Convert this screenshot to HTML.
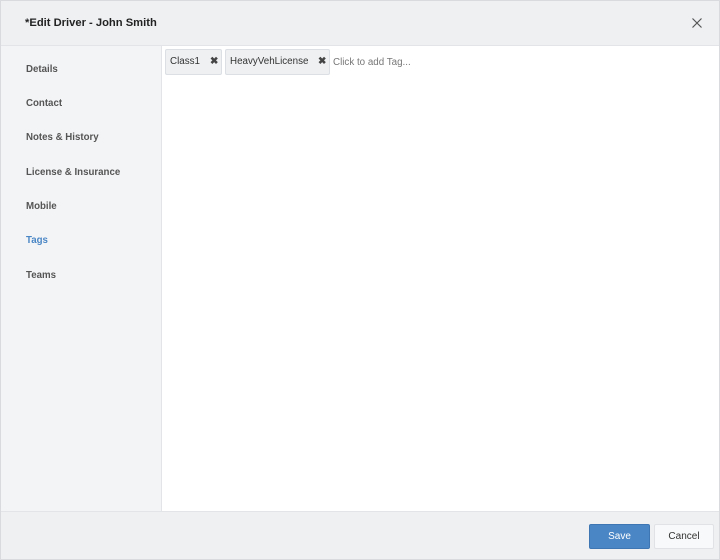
<!DOCTYPE html>
<html><head><style>
*{margin:0;padding:0;box-sizing:border-box}
body{width:720px;height:560px;font-family:"Liberation Sans",Arial,sans-serif;background:#eef0f2;position:relative;overflow:hidden}
.frame{position:absolute;left:0;top:0;width:720px;height:560px;border:1px solid #d8dadd;z-index:5;pointer-events:none}
.hdr{position:absolute;left:0;top:0;width:720px;height:46px;background:#eef0f2;border-bottom:1px solid #e2e4e7}
.title{position:absolute;left:25px;top:17px;font-size:11.2px;font-weight:bold;color:#222}
.close{position:absolute;left:691px;top:17px}
.side{position:absolute;left:0;top:46px;width:162px;height:465px;background:#f3f4f6;border-right:1px solid #e2e4e7}
.side div{position:absolute;left:26px;font-size:9.7px;font-weight:bold;color:#555}
.main{position:absolute;left:162px;top:46px;width:558px;height:465px;background:#fff}
.tag{position:absolute;top:3px;height:26px;background:#eef0f2;border:1px solid #dcdfe3;border-radius:2px;font-size:9.8px;color:#333;padding:6px 0 0 4px}
.tag b{position:absolute;top:6px;font-size:10px;color:#444}
.ph{position:absolute;left:171px;top:11px;font-size:9.8px;color:#777}
.foot{position:absolute;left:0;top:511px;width:720px;height:49px;background:#eef0f2;border-top:1px solid #e2e4e7}
.btn{position:absolute;top:12px;height:25px;border-radius:2px;font-size:10px;text-align:center;line-height:23px}
</style></head><body>
<div class="frame"></div>
<div class="hdr"><div class="title">*Edit Driver - John Smith</div>
<svg class="close" width="12" height="12" viewBox="0 0 12 12"><path d="M1.5 1.5L10.5 10.5M10.5 1.5L1.5 10.5" stroke="#555" stroke-width="1.2"/></svg></div>
<div class="side">
<div style="top:18px">Details</div>
<div style="top:52px">Contact</div>
<div style="top:86px">Notes &amp; History</div>
<div style="top:121px">License &amp; Insurance</div>
<div style="top:155px">Mobile</div>
<div style="top:189px;color:#4a86c5">Tags</div>
<div style="top:224px">Teams</div>
</div>
<div class="main">
<div class="tag" style="left:3px;width:57px">Class1<b style="left:44px">✖</b></div>
<div class="tag" style="left:63px;width:105px">HeavyVehLicense<b style="left:92px">✖</b></div>
<div class="ph">Click to add Tag...</div>
</div>
<div class="foot">
<div class="btn" style="left:589px;width:61px;background:#4a86c5;border:1px solid #3d76b3;color:#fff">Save</div>
<div class="btn" style="left:654px;width:60px;background:#f8f9fa;border:1px solid #e0e2e5;color:#333">Cancel</div>
</div>
</body></html>
